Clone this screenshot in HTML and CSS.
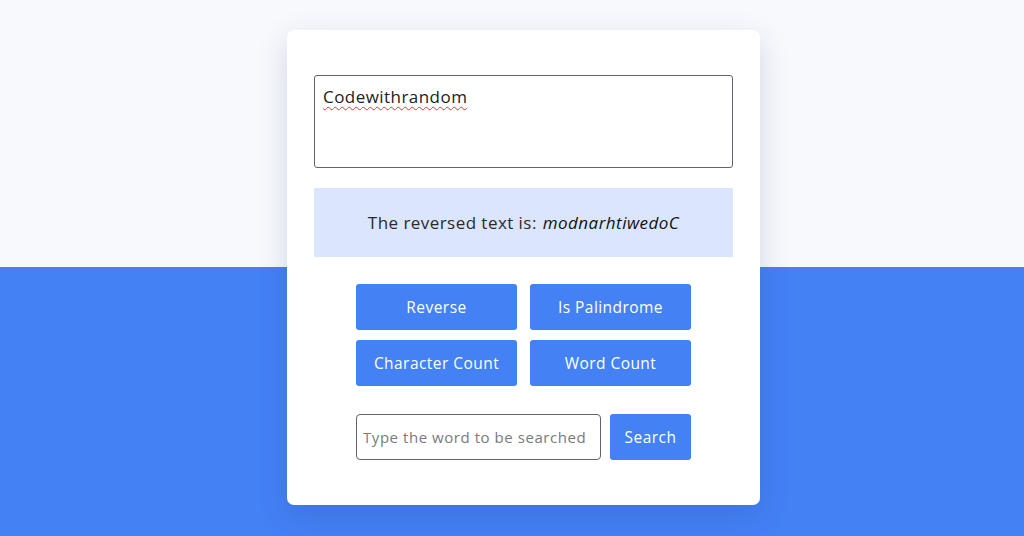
FILE: index.html
```html
<!DOCTYPE html>
<html lang="en">
<head>
<meta charset="UTF-8">
<title>String Tools</title>
<link rel="stylesheet" href="styles.css">
</head>
<body>
<div class="page">
  <div class="bg-top"></div>
  <div class="bg-bottom"></div>
  <div class="card">
    <textarea class="input-text" spellcheck="false">Codewithrandom</textarea>
    <div class="result">The reversed text is: <em>modnarhtiwedoC</em></div>
    <div class="actions">
      <button class="btn">Reverse</button>
      <button class="btn">Is Palindrome</button>
      <button class="btn">Character Count</button>
      <button class="btn">Word Count</button>
    </div>
    <div class="search">
      <input class="search-input" type="text" placeholder="Type the word to be searched">
      <button class="btn search-btn">Search</button>
    </div>
  </div>
</div>
</body>
</html>
```

FILE: styles.css
```css
* { box-sizing: border-box; }
html, body { margin: 0; padding: 0; }
body {
  width: 1024px;
  height: 536px;
  overflow: hidden;
  font-family: "Open Sans", "DejaVu Sans", sans-serif;
}
.page {
  position: relative;
  width: 1024px;
  height: 536px;
  display: flex;
  flex-direction: column;
}
.bg-top { height: 267px; background: #f8f9fd; }
.bg-bottom { flex: 1; background: #4481f5; }
.card {
  position: absolute;
  left: 287px;
  top: 30px;
  width: 473px;
  height: 475px;
  background: #fff;
  border-radius: 7px;
  box-shadow: 0 10px 30px rgba(30, 60, 120, 0.18);
  padding: 45px 27px;
  display: flex;
  flex-direction: column;
  align-items: center;
}
.input-text {
  width: 419px;
  height: 93px;
  border: 1px solid #5f6470;
  border-radius: 3px;
  padding: 9px 8px;
  font-family: inherit;
  font-size: 17px;
  letter-spacing: 0.45px;
  color: #222;
  resize: none;
  outline: none;
  text-decoration: underline wavy #e53935;
  text-decoration-thickness: 1px;
  text-underline-offset: 3px;
}
.result {
  width: 419px;
  height: 69px;
  margin-top: 20px;
  background: #dbe5fc;
  display: flex;
  align-items: center;
  justify-content: center;
  font-size: 17px;
  letter-spacing: 0.45px;
  color: #2a2a2a;
}
.result em { font-weight: 500; margin-left: 6px; color: #111; }
.actions {
  margin-top: 27px;
  display: grid;
  grid-template-columns: 161px 161px;
  column-gap: 13px;
  row-gap: 10px;
}
.btn {
  height: 46px;
  border: none;
  border-radius: 3px;
  background: #4481f5;
  color: #fff;
  font-family: inherit;
  font-size: 15.5px;
  font-weight: 500;
  letter-spacing: 0.45px;
  cursor: pointer;
}
.search {
  margin-top: 28px;
  display: flex;
  gap: 9px;
}
.search-input {
  width: 245px;
  height: 46px;
  border: 1px solid #5f6470;
  border-radius: 4px;
  padding: 0 6px;
  font-family: inherit;
  font-size: 15px;
  letter-spacing: 0.55px;
  outline: none;
}
.search-input::placeholder { color: #7a7a7a; }
.search-btn { width: 81px; }
```
